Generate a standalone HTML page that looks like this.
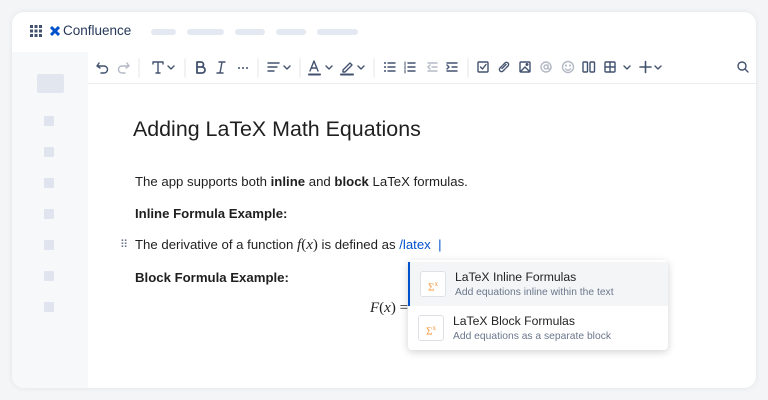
<!DOCTYPE html>
<html><head><style>
body{margin:0;width:768px;height:400px;background:#f4f5f7;font-family:"Liberation Sans",sans-serif;position:relative;overflow:hidden;color:#1f1f1f}
.card{position:absolute;left:12px;top:12px;width:744px;height:376px;background:#fff;border-radius:12px;box-shadow:0 0 6px rgba(0,0,0,.08);overflow:hidden}
.side{position:absolute;left:0;top:40px;width:76px;height:340px;background:#f7f8fa}
.sq{position:absolute;left:32px;width:10px;height:10px;background:#dfe4ee;border-radius:1px}
.bar{position:absolute;top:17px;height:6px;background:#e4e8f0;border-radius:3px}
.tb{position:absolute;left:76px;top:40px;right:0;height:31px;border-bottom:1px solid #ebecf0}
svg.ic2{position:absolute;top:59px}
.sep{position:absolute;top:57px;width:1px;height:20px;background:#ebecf0}
.t{position:absolute;font-size:13.2px;color:#1f1f1f;white-space:nowrap}
.m{font-family:"Liberation Serif",serif;font-style:italic;font-size:15px}
.pop{position:absolute;left:396px;top:248px;width:260px;height:90px;background:#fff;border-radius:4px;box-shadow:0 2px 8px rgba(0,0,0,.18)}
.it{position:absolute;left:0;width:260px;height:44px}
.ic{position:absolute;left:10px;top:9px;width:24px;height:24px;border:1px solid #dfe1e6;border-radius:3px;background:#fff;color:#f79232;font-size:11px;text-align:center;line-height:24px;font-family:"Liberation Serif",serif}
.l1{position:absolute;left:45px;top:8px;font-size:12.2px;color:#222}
.l2{position:absolute;left:45px;top:25px;font-size:10.3px;color:#6b778c}
</style></head><body>
<div class="card">
 <svg style="position:absolute;left:18px;top:13px" width="12" height="12"><g fill="#42526e"><rect x="0" y="0" width="3" height="3"/><rect x="4.5" y="0" width="3" height="3"/><rect x="9" y="0" width="3" height="3"/><rect x="0" y="4.5" width="3" height="3"/><rect x="4.5" y="4.5" width="3" height="3"/><rect x="9" y="4.5" width="3" height="3"/><rect x="0" y="9" width="3" height="3"/><rect x="4.5" y="9" width="3" height="3"/><rect x="9" y="9" width="3" height="3"/></g></svg>
 <svg style="position:absolute;left:38px;top:14px" width="10" height="10"><path d="M1 1 L9 9 M9 1 L1 9" stroke="#0052cc" stroke-width="3"/></svg>
 <div style="position:absolute;left:51px;top:11px;font-size:13.5px;color:#253858">Confluence</div>
 <div class="bar" style="left:139px;width:25px"></div><div class="bar" style="left:175px;width:37px"></div><div class="bar" style="left:223px;width:30px"></div><div class="bar" style="left:264px;width:30px"></div><div class="bar" style="left:305px;width:41px"></div>
 <div class="side">
  <div style="position:absolute;left:25px;top:22px;width:27px;height:19px;background:#e1e6ef;border-radius:2px"></div>
  <div class="sq" style="top:64px"></div><div class="sq" style="top:95px"></div><div class="sq" style="top:126px"></div><div class="sq" style="top:157px"></div><div class="sq" style="top:188px"></div><div class="sq" style="top:219px"></div><div class="sq" style="top:250px"></div>
 </div>
 <div class="tb"></div>
 <div class="t" style="left:121px;top:105px;font-size:21.4px">Adding LaTeX Math Equations</div>
 <div class="t" style="left:123px;top:162px">The app supports both <b>inline</b> and <b>block</b> LaTeX formulas.</div>
 <div class="t" style="left:123px;top:194px;font-weight:bold">Inline Formula Example:</div>
 <div class="t" style="left:108px;top:226px;color:#6b778c;font-size:11px">⠿</div>
 <div class="t" style="left:123px;top:225px">The derivative of a function <span class="m">f</span><span style="font-family:'Liberation Serif';font-size:15px">(</span><span class="m">x</span><span style="font-family:'Liberation Serif';font-size:15px">)</span> is defined as <span style="color:#0052cc">/latex</span> &nbsp;<span style="color:#0052cc">|</span></div>
 <div class="t" style="left:123px;top:258px;font-weight:bold">Block Formula Example:</div>
 <div class="t" style="left:358px;top:288px;font-family:'Liberation Serif';font-size:15px"><i>F</i>(<i>x</i>) =</div>
 <div class="pop">
  <div class="it" style="top:2px;background:#f4f5f7;border-left:2px solid #0052cc;width:258px"><div class="ic">Σ<sup style="font-size:7px">x</sup></div><div class="l1">LaTeX Inline Formulas</div><div class="l2">Add equations inline within the text</div></div>
  <div class="it" style="top:46px"><div class="ic">Σ<sup style="font-size:7px">x</sup></div><div class="l1">LaTeX Block Formulas</div><div class="l2">Add equations as a separate block</div></div>
 </div>
</div>
<!-- toolbar icons, body coords -->
<g></g>
<svg style="position:absolute;left:0;top:0" width="768" height="100" fill="none" stroke="#42526e" stroke-width="1.4" stroke-linecap="round" stroke-linejoin="round">
 <path d="M99 63 L97 66 L100 68 M97 66 H104 A3.5 3.5 0 0 1 104 73 H101"/>
 <path stroke="#b3bac5" d="M127 63 L129 66 L126 68 M129 66 H122 A3.5 3.5 0 0 0 122 73 H125"/>
 <line x1="139" y1="59" x2="139" y2="77" stroke="#ebecf0"/>
 <path d="M153 62 V64 M153 62 H163 V64 M158 62 V73 M156 73 H160"/><path d="M168 66 L171 69 L174 66"/>
 <line x1="185" y1="59" x2="185" y2="77" stroke="#ebecf0"/>
 <path stroke-width="1.8" d="M197 62 H201 A2.5 2.5 0 0 1 201 67 H197 Z M197 67 H202 A3 3 0 0 1 202 73 H197 Z"/>
 <path d="M219 62 H225 M217 73 H223 M222 62 L220 73"/>
 <g fill="#42526e" stroke="none"><circle cx="239" cy="68" r="1"/><circle cx="243" cy="68" r="1"/><circle cx="247" cy="68" r="1"/></g>
 <line x1="258" y1="59" x2="258" y2="77" stroke="#ebecf0"/>
 <path d="M268 63 H279 M268 67 H277 M268 71 H274"/><path d="M284 66 L287 69 L290 66"/>
 <line x1="300" y1="59" x2="300" y2="77" stroke="#ebecf0"/>
 <path d="M310 71 L314 61 L318 71 M311.5 68 H316.5"/><path stroke-width="2" d="M309 74.5 H320"/><path d="M326 66 L329 69 L332 66"/>
 <path d="M343 70 L350 63 L352 65 L345 72 H343 Z"/><path stroke-width="2" d="M341 74.5 H353"/><path d="M358 66 L361 69 L364 66"/>
 <line x1="374" y1="59" x2="374" y2="77" stroke="#ebecf0"/>
 <g fill="#42526e" stroke="none"><circle cx="385" cy="63" r="1"/><circle cx="385" cy="67" r="1"/><circle cx="385" cy="71" r="1"/></g><path d="M388 63 H395 M388 67 H395 M388 71 H395"/>
 <path stroke-width="1" d="M405 62 V65 M405 66 V69 M405 70 V73"/><path d="M408 63 H415 M408 67 H415 M408 71 H415"/>
 <path stroke="#b3bac5" d="M428 63 H437 M432 67 H437 M428 71 H437 M430 65 L428 67 L430 69"/>
 <path d="M447 63 H457 M452 67 H457 M447 71 H457 M447 65 L449 67 L447 69"/>
 <line x1="468" y1="59" x2="468" y2="77" stroke="#ebecf0"/>
 <rect x="478" y="62" width="10" height="10" rx="1"/><path d="M480.5 67 L482.5 69 L486 64.5"/>
 <path d="M502 66 L500 68 A2 2 0 0 0 503 71 L505 69 M506 68 L508 66 A2 2 0 0 0 505 63 L503 65 M502 68.5 L506 64.5"/>
 <rect x="520" y="62" width="10" height="10" rx="1"/><path d="M521 71 L525 67 L529 71"/><circle cx="527" cy="64.5" r="0.8"/>
 <g stroke="#b3bac5"><circle cx="546" cy="67" r="5"/><circle cx="546" cy="67" r="2"/><path d="M548 65 V68 A1.5 1.5 0 0 0 551 67"/>
 <circle cx="568" cy="67" r="5.5"/><path d="M565.5 69 Q568 71.5 570.5 69"/><circle cx="566" cy="65.5" r=".4"/><circle cx="570" cy="65.5" r=".4"/></g>
 <rect x="583" y="62" width="4.5" height="10" rx="1"/><rect x="590" y="62" width="4.5" height="10" rx="1"/>
 <rect x="605" y="62" width="10" height="10" rx="1"/><path d="M605 67 H615 M610 62 V72"/><path d="M624 66 L627 69 L630 66"/>
 <path stroke-width="1.6" d="M640 67 H651 M645.5 61.5 V72.5"/><path d="M655 66 L658 69 L661 66"/>
 <circle cx="742" cy="66" r="4"/><path d="M745 69 L748 72"/>
</svg>
</body></html>
